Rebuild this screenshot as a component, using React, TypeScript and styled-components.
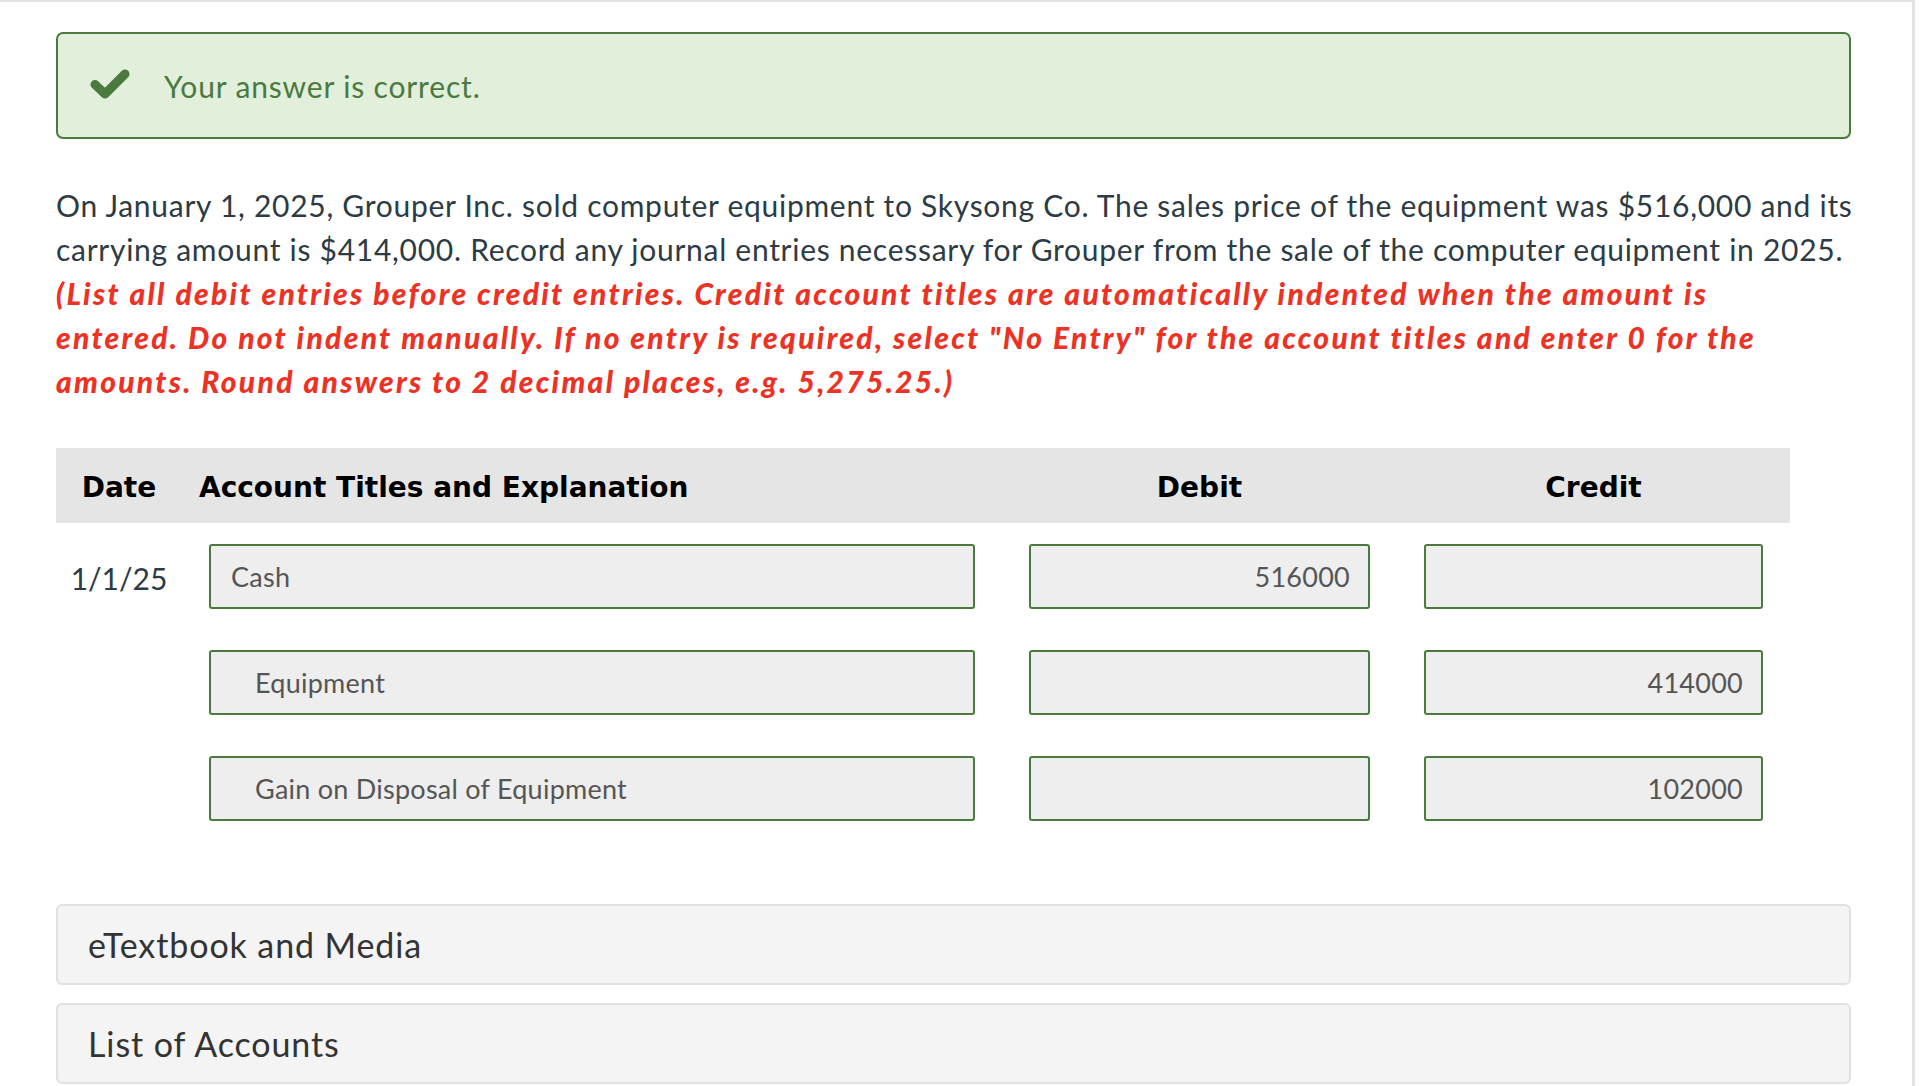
import React from "react";
import styled, { createGlobalStyle } from "styled-components";

const GlobalStyle = createGlobalStyle`
  html, body { margin: 0; padding: 0; background: #ffffff; }
  body { font-family: Lato, "Open Sans", "Liberation Sans", sans-serif; }
  * { box-sizing: border-box; }
`;

const Frame = styled.div`
  width: 1915px;
  min-height: 1086px;
  border-top: 2px solid #e3e3e3;
  border-right: 3px solid #e3e3e3;
  padding: 30px 61px 0 56px;
`;

const Feedback = styled.div`
  height: 107px;
  display: flex;
  align-items: center;
  gap: 33px;
  padding-left: 31px;
  background: #e2efdb;
  border: 2px solid #4b7a3f;
  border-radius: 7px;
  color: #4b7a3f;
  font-size: 30px;
  letter-spacing: 0.85px;
  line-height: 1;
`;

const CheckIcon = styled.svg`
  width: 42px;
  height: 34px;
  flex: none;
  margin-top: -4px;
`;

const Question = styled.div`
  margin-top: 44px;
  width: 1812px;
  font-size: 30px;
  line-height: 44px;
  letter-spacing: 0.72px;
  color: #2d3b45;
`;

const Instruction = styled.div`
  color: #ec3224;
  font-weight: 900;
  font-style: italic;
  letter-spacing: 2.28px;
`;

const Table = styled.div`
  margin-top: 45px;
  width: 1734px;
  display: grid;
  grid-template-columns: 126px 820px 395px 393px;
`;

const HeadCell = styled.div<{ $align?: string; $pad?: number }>`
  height: 75px;
  background: #e5e5e5;
  display: flex;
  align-items: center;
  justify-content: ${(p) => p.$align || "center"};
  padding-left: ${(p) => p.$pad || 0}px;
  padding-top: 3px;
  font-family: "DejaVu Sans", Verdana, sans-serif;
  font-size: 28px;
  font-weight: 700;
  color: #000;
`;

const Cell = styled.div<{ $first?: boolean }>`
  margin-top: ${(p) => (p.$first ? 21 : 41)}px;
  height: 65px;
  display: flex;
  align-items: center;
  justify-content: center;
  padding: 0 27px;
`;

const DateText = styled.span`
  font-size: 30px;
  color: #2d3b45;
  padding-top: 2px;
`;

const Field = styled.input<{ $indent?: boolean; $num?: boolean }>`
  width: 100%;
  height: 65px;
  border: 2px solid #4b7a3f;
  border-radius: 3px;
  background: #eeeeee;
  color: #555555;
  font-family: Lato, "Open Sans", "Liberation Sans", sans-serif;
  font-size: 27px;
  letter-spacing: 0.25px;
  padding: 0 ${(p) => (p.$num ? 18 : 20)}px 0 ${(p) => (p.$indent ? 44 : 20)}px;
  text-align: ${(p) => (p.$num ? "right" : "left")};
  outline: none;
`;

const Accordion = styled.div<{ $first?: boolean }>`
  margin-top: ${(p) => (p.$first ? 83 : 18)}px;
  height: 81px;
  display: flex;
  align-items: center;
  padding-left: 30px;
  background: #f4f4f4;
  border: 2px solid #e1e1e1;
  border-radius: 6px;
  font-size: 34px;
  letter-spacing: 0.9px;
  color: #333333;
`;

type Row = { date?: string; account: string; indent?: boolean; debit?: string; credit?: string };

const rows: Row[] = [
  { date: "1/1/25", account: "Cash", debit: "516000" },
  { account: "Equipment", indent: true, credit: "414000" },
  { account: "Gain on Disposal of Equipment", indent: true, credit: "102000" },
];

export default function App() {
  return (
    <>
      <GlobalStyle />
      <Frame>
        <Feedback>
          <CheckIcon viewBox="0 0 42 34">
            <polyline
              points="6,17.5 16,27 36,7"
              fill="none"
              stroke="#4b7a3f"
              strokeWidth="9"
              strokeLinecap="round"
              strokeLinejoin="round"
            />
          </CheckIcon>
          <span>Your answer is correct.</span>
        </Feedback>

        <Question>
          On January 1, 2025, Grouper Inc. sold computer equipment to Skysong Co. The sales price of the equipment was $516,000 and its
          <br />
          carrying amount is $414,000. Record any journal entries necessary for Grouper from the sale of the computer equipment in 2025.
          <Instruction>
            (List all debit entries before credit entries. Credit account titles are automatically indented when the amount is
            <br />
            entered. Do not indent manually. If no entry is required, select "No Entry" for the account titles and enter 0 for the
            <br />
            amounts. Round answers to 2 decimal places, e.g. 5,275.25.)
          </Instruction>
        </Question>

        <Table>
          <HeadCell>Date</HeadCell>
          <HeadCell $align="flex-start" $pad={17}>
            Account Titles and Explanation
          </HeadCell>
          <HeadCell>Debit</HeadCell>
          <HeadCell>Credit</HeadCell>
          {rows.map((r, i) => (
            <React.Fragment key={i}>
              <Cell $first={i === 0}>{r.date && <DateText>{r.date}</DateText>}</Cell>
              <Cell $first={i === 0}>
                <Field readOnly value={r.account} $indent={r.indent} />
              </Cell>
              <Cell $first={i === 0}>
                <Field readOnly value={r.debit || ""} $num />
              </Cell>
              <Cell $first={i === 0}>
                <Field readOnly value={r.credit || ""} $num />
              </Cell>
            </React.Fragment>
          ))}
        </Table>

        <Accordion $first>eTextbook and Media</Accordion>
        <Accordion>List of Accounts</Accordion>
      </Frame>
    </>
  );
}
